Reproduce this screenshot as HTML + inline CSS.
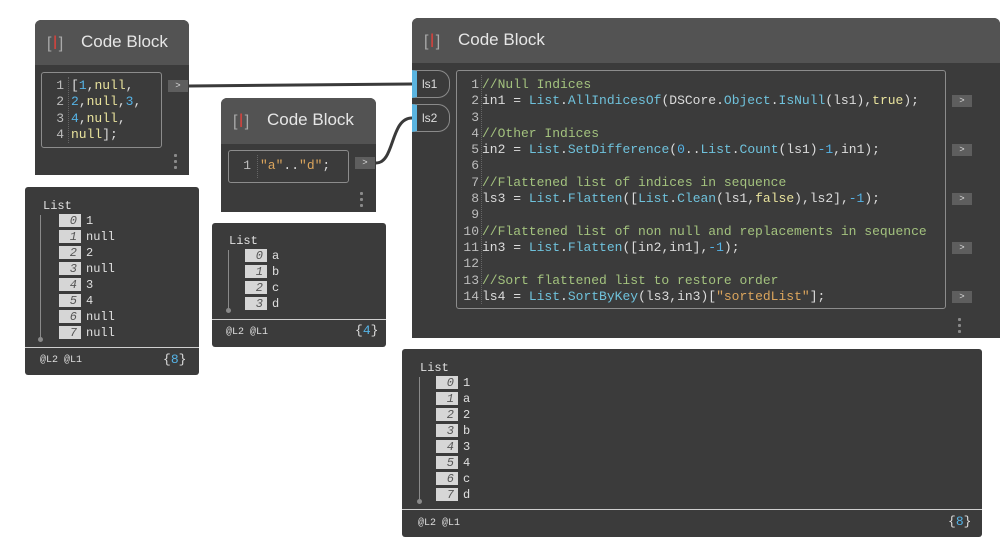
<!DOCTYPE html><html><head><style>
*{margin:0;padding:0;box-sizing:border-box}
body{width:1008px;height:548px;background:#fff;position:relative;overflow:hidden;font-family:"Liberation Sans",sans-serif}
.a{position:absolute}
.node{position:absolute;background:#3b3b3b;border-radius:6px 6px 0 0;overflow:hidden}
.hd{position:absolute;left:0;top:0;right:0;height:45px;background:#535353;color:#e6e6e6;font-size:17px}
.hd .ic{position:absolute;left:12px;top:12px;color:#aaa;font-size:16px;letter-spacing:1px}
.hd .ic b{color:#c8443f;font-weight:normal;font-size:19px;position:relative;top:1px}
.hd .t{position:absolute;left:46px;top:12px}
.cb{position:absolute;border:1px solid #8c8c8c;border-radius:3px;font-family:"Liberation Mono",monospace;font-size:13px;color:#dcdcdc;white-space:pre}
.ln{position:absolute;text-align:right;color:#bdbdbd}
.sep{position:absolute;top:4px;bottom:4px;border-left:1px dotted #666}
.port{position:absolute;width:20px;height:12px;background:#5e5e5e;color:#ddd;font-size:9px;text-align:center;line-height:12px;font-family:"Liberation Mono",monospace}
.dots{position:absolute;width:3px}
.dots i{display:block;width:3px;height:3px;background:#8a8a8a;margin-bottom:3px;border-radius:1px}
.c{color:#a3c27e}.k{color:#6fc2dc}.n{color:#55b3e6}.y{color:#e8e29c}.s{color:#dba55d}
.pv{position:absolute;background:#3b3b3b;border-radius:3px;font-family:"Liberation Mono",monospace;font-size:12px;color:#e0e0e0}
.pv .rw{position:absolute;height:16px;line-height:16px}
.pv .ix{float:left;width:22px;height:13px;line-height:14px;margin-top:1px;background:#d6d6d6;color:#555;font-style:italic;text-align:right;padding-right:4px;margin-right:5px;font-size:12px}
.pv .vl{position:absolute;width:1px;background:#8a8a8a}
.pv .dt{position:absolute;width:5px;height:5px;border-radius:50%;background:#8a8a8a}
.pv .ft{position:absolute;left:0;right:0;border-top:1px solid #cfcfcf}
.pv .fl{position:absolute;font-size:10px;color:#ddd}
.pv .fr{position:absolute;font-size:13px;color:#ddd}
.inp{position:absolute;left:0;width:38px;height:28px;border:1px solid #8a8a8a;border-left:5px solid #5ab4e0;border-radius:0 12px 12px 0;background:#3b3b3b;color:#ddd;font-size:12px;line-height:26px;padding-left:5px}
</style></head><body>

<svg class="a" style="left:0;top:0" width="1008" height="548">
<path d="M189 86 L412 84" stroke="#3a3a3a" stroke-width="3" fill="none"/>
<path d="M376 163 C395 163,390 118,412 118" stroke="#3a3a3a" stroke-width="3" fill="none"/>
</svg>

<div class="node" style="left:35px;top:20px;width:154px;height:155px">
<div class="hd"><span class="ic">[<b>I</b>]</span><span class="t">Code Block</span></div>
<div class="cb" style="left:6px;top:52px;width:121px;height:76px">
<div class="ln" style="left:0;top:5px;width:22px;line-height:16.3px">1
2
3
4</div><div class="sep" style="left:26px"></div>
<div class="a" style="left:29px;top:5px;line-height:16.3px">[<span class="n">1</span>,<span class="y">null</span>,
<span class="n">2</span>,<span class="y">null</span>,<span class="n">3</span>,
<span class="n">4</span>,<span class="y">null</span>,
<span class="y">null</span>];</div></div>
<div class="port" style="left:133px;top:60px">&gt;</div>
<div class="dots" style="left:139px;top:134px"><i></i><i></i><i></i></div>
</div>

<div class="node" style="left:221px;top:98px;width:155px;height:114px">
<div class="hd" style="height:46px"><span class="ic">[<b>I</b>]</span><span class="t">Code Block</span></div>
<div class="cb" style="left:7px;top:52px;width:121px;height:33px">
<div class="ln" style="left:0;top:7px;width:22px">1</div><div class="sep" style="left:28px"></div>
<div class="a" style="left:31px;top:7px"><span class="s">"a"</span>..<span class="s">"d"</span>;</div></div>
<div class="port" style="left:134px;top:59px">&gt;</div>
<div class="dots" style="left:139px;top:94px"><i></i><i></i><i></i></div>
</div>

<div class="node" style="left:412px;top:18px;width:588px;height:320px">
<div class="hd"><span class="ic">[<b>I</b>]</span><span class="t">Code Block</span></div>
<div class="inp" style="top:52px">ls1</div>
<div class="inp" style="top:86px">ls2</div>
<div class="cb" style="left:44px;top:52px;width:490px;height:239px">
<div class="ln" style="left:0;top:6px;width:22px;line-height:16.3px">1
2
3
4
5
6
7
8
9
10
11
12
13
14</div><div class="sep" style="left:24px"></div>
<div class="a" style="left:25px;top:6px;line-height:16.3px"><span class="c">//Null Indices</span>
in1 = <span class="k">List</span>.<span class="k">AllIndicesOf</span>(DSCore.<span class="k">Object</span>.<span class="k">IsNull</span>(ls1),<span class="y">true</span>);

<span class="c">//Other Indices</span>
in2 = <span class="k">List</span>.<span class="k">SetDifference</span>(<span class="n">0</span>..<span class="k">List</span>.<span class="k">Count</span>(ls1)<span class="n">-1</span>,in1);

<span class="c">//Flattened list of indices in sequence</span>
ls3 = <span class="k">List</span>.<span class="k">Flatten</span>([<span class="k">List</span>.<span class="k">Clean</span>(ls1,<span class="y">false</span>),ls2],<span class="n">-1</span>);

<span class="c">//Flattened list of non null and replacements in sequence</span>
in3 = <span class="k">List</span>.<span class="k">Flatten</span>([in2,in1],<span class="n">-1</span>);

<span class="c">//Sort flattened list to restore order</span>
ls4 = <span class="k">List</span>.<span class="k">SortByKey</span>(ls3,in3)[<span class="s">"sortedList"</span>];</div></div>
<div class="port" style="left:540px;top:77px">&gt;</div>
<div class="port" style="left:540px;top:126px">&gt;</div>
<div class="port" style="left:540px;top:175px">&gt;</div>
<div class="port" style="left:540px;top:224px">&gt;</div>
<div class="port" style="left:540px;top:273px">&gt;</div>
<div class="dots" style="left:546px;top:300px"><i></i><i></i><i></i></div>
</div>

<div class="pv" style="left:25px;top:187px;width:174px;height:188px">
<div class="a" style="left:18px;top:12px">List</div>
<div class="vl" style="left:15px;top:28px;height:124px"></div><div class="dt" style="left:13px;top:150px"></div>
<div class="rw" style="left:34px;top:26px"><span class="ix">0</span>1</div>
<div class="rw" style="left:34px;top:42px"><span class="ix">1</span>null</div>
<div class="rw" style="left:34px;top:58px"><span class="ix">2</span>2</div>
<div class="rw" style="left:34px;top:74px"><span class="ix">3</span>null</div>
<div class="rw" style="left:34px;top:90px"><span class="ix">4</span>3</div>
<div class="rw" style="left:34px;top:106px"><span class="ix">5</span>4</div>
<div class="rw" style="left:34px;top:122px"><span class="ix">6</span>null</div>
<div class="rw" style="left:34px;top:138px"><span class="ix">7</span>null</div>
<div class="ft" style="top:160px"></div>
<div class="fl" style="left:15px;top:168px">@L2 @L1</div>
<div class="fr" style="left:138px;top:165px">{<span class="n">8</span>}</div>
</div>

<div class="pv" style="left:212px;top:223px;width:174px;height:124px">
<div class="a" style="left:17px;top:11px">List</div>
<div class="vl" style="left:16px;top:27px;height:60px"></div><div class="dt" style="left:14px;top:85px"></div>
<div class="rw" style="left:33px;top:25px"><span class="ix">0</span>a</div>
<div class="rw" style="left:33px;top:41px"><span class="ix">1</span>b</div>
<div class="rw" style="left:33px;top:57px"><span class="ix">2</span>c</div>
<div class="rw" style="left:33px;top:73px"><span class="ix">3</span>d</div>
<div class="ft" style="top:96px"></div>
<div class="fl" style="left:14px;top:104px">@L2 @L1</div>
<div class="fr" style="left:143px;top:100px">{<span class="n">4</span>}</div>
</div>

<div class="pv" style="left:402px;top:349px;width:580px;height:188px">
<div class="a" style="left:18px;top:12px">List</div>
<div class="vl" style="left:17px;top:28px;height:124px"></div><div class="dt" style="left:15px;top:150px"></div>
<div class="rw" style="left:34px;top:26px"><span class="ix">0</span>1</div>
<div class="rw" style="left:34px;top:42px"><span class="ix">1</span>a</div>
<div class="rw" style="left:34px;top:58px"><span class="ix">2</span>2</div>
<div class="rw" style="left:34px;top:74px"><span class="ix">3</span>b</div>
<div class="rw" style="left:34px;top:90px"><span class="ix">4</span>3</div>
<div class="rw" style="left:34px;top:106px"><span class="ix">5</span>4</div>
<div class="rw" style="left:34px;top:122px"><span class="ix">6</span>c</div>
<div class="rw" style="left:34px;top:138px"><span class="ix">7</span>d</div>
<div class="ft" style="top:160px"></div>
<div class="fl" style="left:16px;top:169px">@L2 @L1</div>
<div class="fr" style="left:546px;top:165px">{<span class="n">8</span>}</div>
</div>

</body></html>
